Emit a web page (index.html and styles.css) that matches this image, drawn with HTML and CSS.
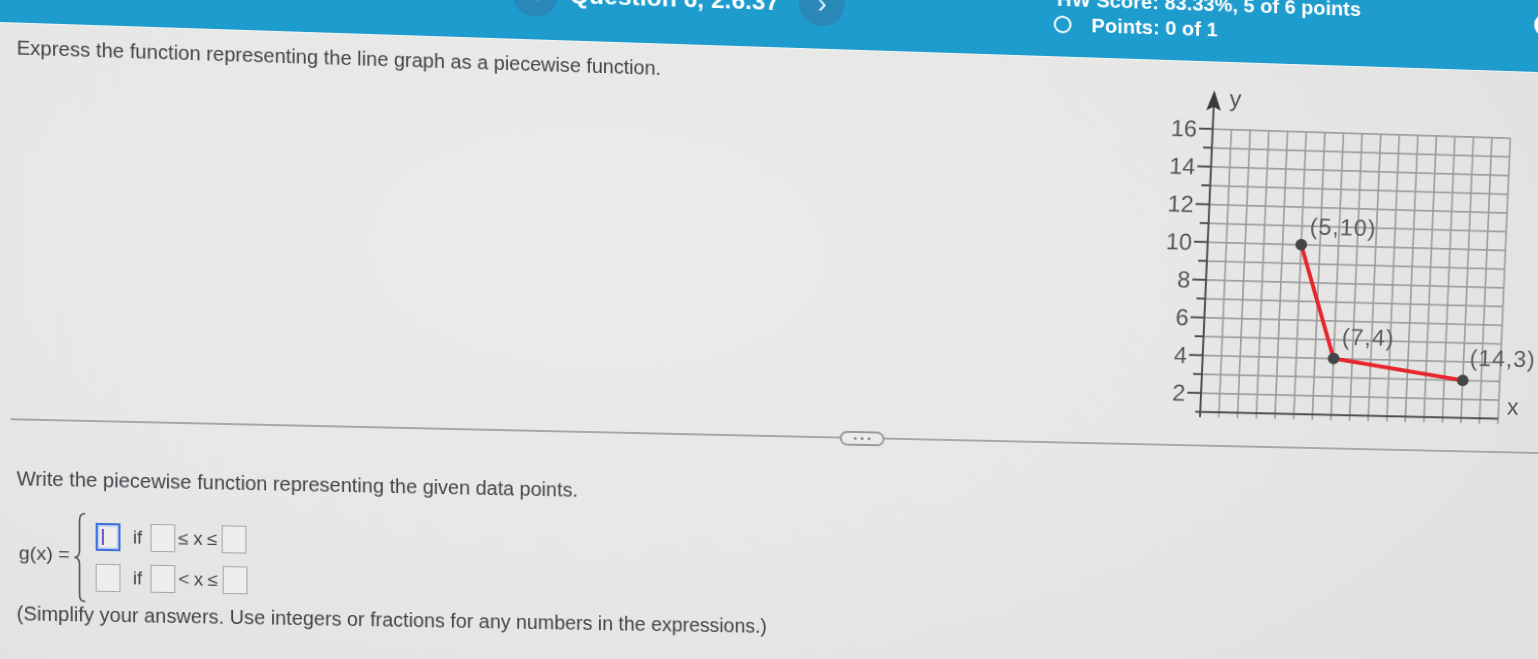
FILE: index.html
```html
<!DOCTYPE html>
<html lang="en">
<head>
<meta charset="utf-8">
<title>Question 6, 2.6.37</title>
<link rel="stylesheet" href="styles.css">
</head>
<body>
<div class="page">
  <header class="topbar">
    <div class="nav">
      <span class="navbtn prev">&#8249;</span>
      <span class="qtitle">Question 6, 2.6.37</span>
      <span class="navbtn">&#8250;</span>
    </div>
    <div class="score">
      <div class="hw">HW Score: 83.33%, 5 of 6 points</div>
      <div class="pts"><span class="ring"></span>Points: 0 of 1</div>
    </div>
    <span class="edge"></span>
  </header>

  <main class="content">
    <section class="top">
      <p class="prompt">Express the function representing the line graph as a piecewise function.</p>
      <svg class="graph" width="400" height="360" viewBox="0 0 400 360">
        <g transform="translate(52,50.8) skewX(-2.5)">
          <path class="grid" d="M19.2,0V298M38.4,0V298M57.6,0V298M76.8,0V298M96,0V298M115.2,0V298M134.4,0V298M153.6,0V298M172.8,0V298M192,0V298M211.2,0V298M230.4,0V298M249.6,0V298M268.8,0V298M288,0V298M307.2,0V298"/>
          <path class="grid" d="M0,0H307.2M0,19.5H307.2M0,39H307.2M0,58.5H307.2M0,78H307.2M0,97.5H307.2M0,117H307.2M0,136.5H307.2M0,156H307.2M0,175.5H307.2M0,195H307.2M0,214.5H307.2M0,234H307.2M0,253.5H307.2M0,273H307.2"/>
          <path class="axis" d="M-5,292.5H307.2M0,-30V298"/>
          <path class="axis" d="M-14,0H0M-14,39H0M-14,78H0M-14,117H0M-14,156H0M-14,195H0M-14,234H0M-14,273H0M-9,19.5H0M-9,58.5H0M-9,97.5H0M-9,136.5H0M-9,175.5H0M-9,214.5H0M-9,253.5H0"/>
          <path class="arrow" d="M0,-40L-7.5,-19L0,-23L7.5,-19Z"/>
          <g class="ticks">
            <text x="-16" y="8.5">16</text>
            <text x="-16" y="47.5">14</text>
            <text x="-16" y="86.5">12</text>
            <text x="-16" y="125.5">10</text>
            <text x="-16" y="164.5">8</text>
            <text x="-16" y="203.5">6</text>
            <text x="-16" y="242.5">4</text>
            <text x="-16" y="281.5">2</text>
          </g>
          <text class="axlabel" x="16" y="-24">y</text>
          <text class="axlabel" x="316" y="288">x</text>
          <polyline class="fn" points="96,117 134.4,234 268.8,253.5"/>
          <circle class="dot" cx="96" cy="117" r="6"/>
          <circle class="dot" cx="134.4" cy="234" r="6"/>
          <circle class="dot" cx="268.8" cy="253.5" r="6"/>
          <text class="plabel" x="104" y="106">(5,10)</text>
          <text class="plabel" x="142" y="219.5">(7,4)</text>
          <text class="plabel" x="275" y="238">(14,3)</text>
        </g>
      </svg>
    </section>

    <div class="divider"><span class="more"><i></i><i></i><i></i></span></div>

    <section class="answer">
      <p class="instr">Write the piecewise function representing the given data points.</p>
      <div class="eq">
        <span class="lhs">g(x) =</span>
        <svg class="brace" width="14" height="90" viewBox="0 0 14 90">
          <path d="M12,1C7,1 6.5,4 6.5,10L6.5,38C6.5,43 4.5,45 1.5,45C4.5,45 6.5,47 6.5,52L6.5,80C6.5,86 7,89 12,89"/>
        </svg>
        <div class="cases">
          <div class="row">
            <span class="box focus"></span>
            <span class="if">if</span>
            <span class="box"></span>
            <span class="rel">&le;x&le;</span>
            <span class="box"></span>
          </div>
          <div class="row">
            <span class="box"></span>
            <span class="if">if</span>
            <span class="box"></span>
            <span class="rel">&lt;x&le;</span>
            <span class="box"></span>
          </div>
        </div>
      </div>
      <p class="note">(Simplify your answers. Use integers or fractions for any numbers in the expressions.)</p>
    </section>
  </main>
</div>
</body>
</html>
```

FILE: styles.css
```css
html, body {
  margin: 0;
  padding: 0;
  overflow: hidden;
  background: #e4e4e2;
}

body {
  width: 1538px;
  height: 659px;
  font-family: "Liberation Sans", Arial, sans-serif;
  color: #44434d;
}

.page {
  width: 1538px;
  height: 730px;
  margin-top: -60px;
  transform-origin: 0 60px;
  transform: matrix3d(1.042, 0.03447, 0, 0.0000273, 0, 1, 0, 0, 0, 0, 1, 0, 0, 0, 0, 1);
  background: radial-gradient(ellipse 70% 80% at 38% 40%, #ebebe9 0%, #e7e7e5 55%, #e1e1df 100%);
}

/* ---------- header ---------- */
.topbar {
  display: flex;
  align-items: flex-start;
  height: 82px;
  background: #1f9cce;
  color: #fff;
  box-shadow: 0 1px 0 #f1f3f3;
}

.nav {
  display: flex;
  align-items: center;
  margin: 13px 0 0 498px;
}

.navbtn {
  width: 46px;
  height: 46px;
  border-radius: 50%;
  background: #2a88b9;
  display: flex;
  align-items: center;
  justify-content: center;
  font-size: 28px;
  line-height: 1;
  color: #e9f5fb;
}

.navbtn.prev {
  color: #4d9cc6;
}

.qtitle {
  font-size: 24.5px;
  font-weight: bold;
  margin: 0 20px 0 11px;
  white-space: nowrap;
}

.score {
  margin: 10px 0 0 214px;
  font-size: 20.5px;
  font-weight: bold;
  line-height: 26px;
  white-space: nowrap;
}

.hw {
  height: 26px;
}

.pts {
  display: flex;
  align-items: center;
  height: 26px;
  margin-left: -3px;
}

.ring {
  width: 18px;
  height: 18px;
  box-sizing: border-box;
  border: 2.5px solid #fff;
  border-radius: 50%;
  margin-right: 20px;
}

.edge {
  width: 20px;
  height: 22px;
  border-radius: 50%;
  background: #fff;
  margin: 22px -16px 0 auto;
}

/* ---------- content ---------- */
.content {
  padding-left: 16px;
}

.top {
  display: flex;
  align-items: flex-start;
}

.prompt {
  flex: 1;
  margin: 13px 0 0;
  font-size: 19.6px;
  line-height: 24px;
}

.graph {
  display: block;
  margin: 19px -12px 0 0;
  flex: none;
}

.grid {
  fill: none;
  stroke: #9d9d9d;
  stroke-width: 1.7;
}

.axis {
  fill: none;
  stroke: #4d4d4d;
  stroke-width: 2;
}

.arrow {
  fill: #3a3a3a;
}

.ticks text {
  font-family: "Liberation Sans", Arial, sans-serif;
  font-size: 24px;
  fill: #555;
  text-anchor: end;
}

.axlabel {
  font-family: "Liberation Sans", Arial, sans-serif;
  font-size: 24px;
  fill: #555;
}

.fn {
  fill: none;
  stroke: #e5262d;
  stroke-width: 4;
  stroke-linecap: round;
  stroke-linejoin: round;
}

.dot {
  fill: #454545;
}

.plabel {
  font-family: "Liberation Sans", Arial, sans-serif;
  font-size: 24px;
  letter-spacing: 1px;
  fill: #5a5a5a;
}

/* ---------- divider ---------- */
.divider {
  display: flex;
  align-items: center;
  margin: 10.5px 0 0 -6.4px;
}

.divider::before {
  content: "";
  width: 814px;
  height: 2px;
  background: #a7a7a7;
}

.divider::after {
  content: "";
  flex: 1;
  height: 2px;
  background: #a7a7a7;
}

.more {
  width: 45px;
  height: 15px;
  box-sizing: border-box;
  border: 2px solid #9a9a9a;
  border-radius: 8px;
  background: #ebebea;
  display: flex;
  align-items: center;
  justify-content: center;
  gap: 4px;
}

.more i {
  width: 3px;
  height: 3px;
  border-radius: 50%;
  background: #8a8a8a;
}

/* ---------- answer ---------- */
.answer {
  margin-top: 39px;
}

.instr {
  margin: 0;
  font-size: 19.5px;
  line-height: 24px;
}

.eq {
  display: flex;
  align-items: center;
  height: 90px;
  margin: 21px 0 0 2px;
  font-size: 19px;
}

.lhs {
  white-space: nowrap;
  margin-top: -6px;
}

.brace {
  display: block;
  margin-left: 3px;
}

.brace path {
  fill: none;
  stroke: #555;
  stroke-width: 1.6;
}

.cases {
  display: flex;
  flex-direction: column;
  gap: 13px;
  margin-left: 8px;
}

.row {
  display: flex;
  align-items: center;
  height: 28px;
}

.box {
  position: relative;
  width: 24px;
  height: 28px;
  box-sizing: border-box;
  border: 1.5px solid #a6a6a6;
  background: #eeeeec;
}

.box.focus {
  width: 24px;
  border: 2px solid #3d6fd6;
  box-shadow: inset 0 0 0 1.5px #b7cbf2;
}

.box.focus::after {
  content: "";
  position: absolute;
  left: 4px;
  top: 4px;
  bottom: 4px;
  width: 1.5px;
  background: #6c56c9;
}

.if {
  margin: 0 8px 0 12px;
  font-size: 18px;
}

.rel {
  margin: 0 0 0 3px;
  letter-spacing: 4.5px;
  font-size: 18px;
}

.note {
  margin: 0;
  font-size: 19.4px;
  line-height: 24px;
}
```
